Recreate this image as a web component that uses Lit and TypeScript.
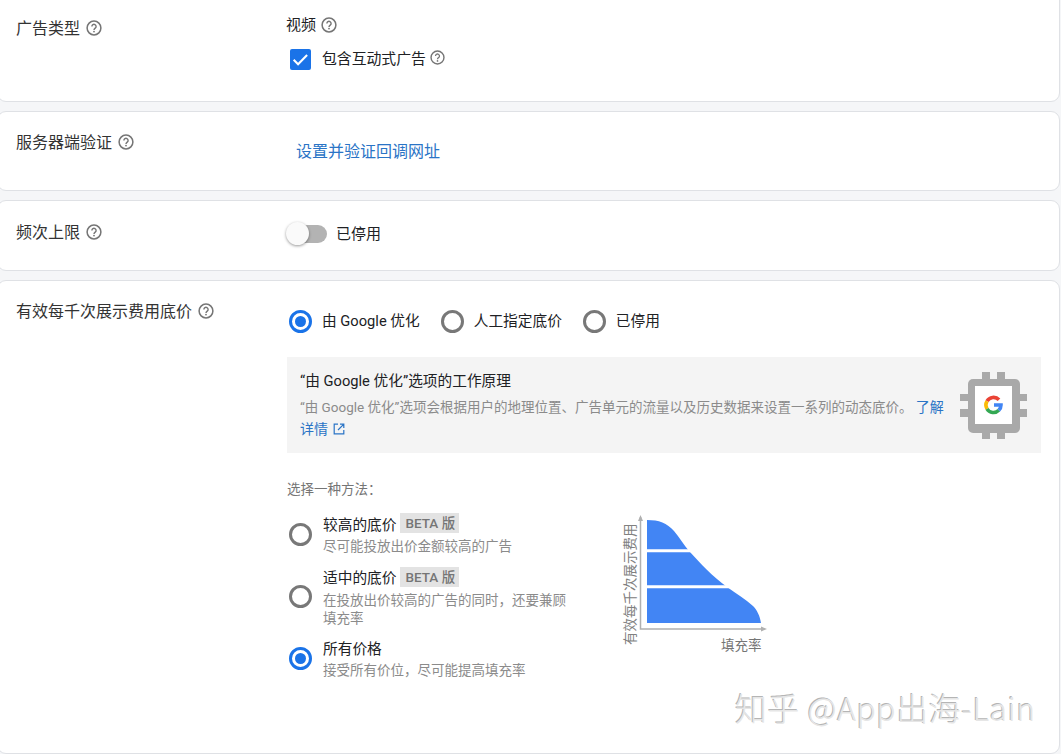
import { LitElement, html, css, svg } from "lit";
import { customElement } from "lit/decorators.js";

const help = (size: number) => html`<svg class="help" width=${size} height=${size} viewBox="0 0 16 16" fill="none">
  <circle cx="8" cy="8" r="6.9" stroke="#757575" stroke-width="1.5"/>
  <path d="M5.9 6.4a2.1 2.1 0 1 1 3.3 1.7c-.8.6-1.2.9-1.2 1.8" stroke="#757575" stroke-width="1.4"/>
  <circle cx="8" cy="11.6" r=".9" fill="#757575"/>
</svg>`;

const radio = (on: boolean) => html`<span class="radio ${on ? "on" : ""}"></span>`;

const chip = svg`
  <g fill="#a9a9a9">
    <rect x="22" y="0" width="8" height="11"/><rect x="37" y="0" width="8" height="11"/>
    <rect x="22" y="56" width="8" height="11"/><rect x="37" y="56" width="8" height="11"/>
    <rect x="0" y="22" width="11" height="7"/><rect x="0" y="37" width="11" height="8"/>
    <rect x="56" y="22" width="11" height="7"/><rect x="56" y="37" width="11" height="8"/>
    <rect x="8" y="7" width="52" height="54" rx="5"/>
  </g>
  <rect x="15" y="14" width="37" height="38" fill="#fff"/>
  <g fill="none" stroke-width="3.6">
    <path d="M39 27.800A7.500 7.500 0 0 0 27 29.200" stroke="#ea4335"/>
    <path d="M27 29.200A7.500 7.500 0 0 0 27 36.800" stroke="#fbbc05"/>
    <path d="M27 36.800A7.500 7.500 0 0 0 38.800 38.300" stroke="#34a853"/>
    <path d="M38.800 38.300A7.500 7.500 0 0 0 41 33H34" stroke="#4285f4"/>
  </g>`;

@customElement("app-root")
export class AppRoot extends LitElement {
  static styles = css`
    :host {
      display: block;
      position: relative;
      width: 1061px;
      height: 754px;
      overflow: hidden;
      background: #f5f6f8;
      font-family: Roboto, "Noto Sans CJK SC", sans-serif;
      color: #202124;
    }
    .page { display: flex; flex-direction: column; gap: 9px; margin: -12px 1px 0 -3px; }
    .card {
      background: #fff;
      border: 1px solid #dfe1e5;
      border-radius: 9px;
      display: grid;
      grid-template-columns: 288px 1fr;
      box-sizing: border-box;
    }
    .c1 { height: 114px; padding-top: 29px; }
    .c2 { height: 80px; padding-top: 20px; }
    .c3 { height: 71px; padding-top: 21px; }
    .c4 { height: 474px; padding-top: 20px; }
    .label { padding-left: 18px; font-size: 16px; line-height: 22px; display: flex; gap: 6px; align-items: flex-start; color: #333; }
    .label .help { margin-top: 2px; }
    .row { display: flex; align-items: center; }
    .video { font-size: 15px; line-height: 22px; gap: 5px; margin-top: -4px; }
    .check-row { font-size: 14.85px; line-height: 22px; margin: 11px 0 0 4px; }
    .check { width: 21px; height: 21px; border-radius: 2px; background: #1a73e8; margin-right: 11px; margin-top: 2px; display: flex; }
    .check-row .help { margin-left: 4px; margin-top: -2px; }
    .link { color: #2a74c6; text-decoration: none; }
    .verify { font-size: 16px; line-height: 22px; margin: 9px 0 0 10px; display: block; }
    .toggle { font-size: 15px; line-height: 22px; margin-top: 1px; }
    .track { position: absolute; left: 7px; top: 2px; width: 34px; height: 18px; border-radius: 9px; background: #b3b3b3; }
    .knob { position: absolute; left: 0; top: -1px; width: 23px; height: 23px; border-radius: 50%; background: #fafafa; box-shadow: 0 1px 3px rgba(0,0,0,.4); }
    .switch { position: relative; width: 41px; height: 22px; margin-right: 9px; }
    .modes { display: flex; align-items: center; font-size: 14.7px; line-height: 22px; margin: 8px 0 0 2px; height: 24px; }
    .modes label { display: flex; align-items: center; gap: 10px; margin-right: 21px; }
    .radio { width: 23px; height: 23px; box-sizing: border-box; border-radius: 50%; border: 3px solid #787878; background: #fff; display: block; flex: none; position: relative; }
    .radio.on { border-color: #1a73e8; }
    .radio.on::after { content: ""; position: absolute; inset: 3px; border-radius: 50%; background: #1a73e8; }
    .body { margin-left: 1px; }
    .info { margin-top: 24px; width: 754px; height: 96px; box-sizing: border-box; background: #f4f4f4; padding: 13px 14px 13px 13px; display: flex; gap: 16px; align-items: center; }
    .info-text { flex: 1; align-self: flex-start; }
    .info-title { font-size: 14.7px; line-height: 22px; }
    .info-desc { font-size: 13.5px; line-height: 21.5px; color: #8b8b8b; margin-top: 5px; }
    .info-desc .link { font-size: 14px; }
    .ext { vertical-align: -1px; margin-left: 2px; }
    .pick { font-size: 13.5px; line-height: 18px; color: #757575; margin-top: 27px; }
    .methods-wrap { display: flex; gap: 49px; margin-top: 15px; }
    .methods { width: 281px; display: flex; flex-direction: column; gap: 11.5px; }
    .method { display: flex; align-items: center; gap: 11px; padding-left: 2px; }
    .m-title { font-size: 14.7px; line-height: 22px; display: flex; gap: 4px; align-items: center; color: #202124; }
    .badge { background: #e3e3e3; color: #757575; font-size: 13.5px; line-height: 20px; padding: 0 4px 0 5px; font-weight: 500; margin-bottom: 3px; }
    .m-desc { font-size: 13.5px; line-height: 18px; color: #8b8b8b; width: 250px; margin-top: 1px; }
    .chart { width: 160px; height: 145px; position: relative; flex: none; margin-top: 1px; }
    .chart svg { display: block; position: absolute; left: 0; top: 0; }
    .y-label { position: absolute; left: 6px; top: 9px; writing-mode: vertical-rl; text-orientation: sideways; transform: rotate(180deg); font-size: 13.5px; line-height: 15px; color: #808080; height: 122px; white-space: nowrap; }
    .x-label { position: absolute; left: 104px; top: 122px; font-size: 13.5px; line-height: 18px; color: #757575; }
    .mark { position: absolute; left: 735px; top: 686px; font-size: 32px; line-height: 42px; color: #e6e6e6; letter-spacing: .5px; white-space: nowrap; font-family: "Noto Sans CJK SC", sans-serif; font-weight: 300; text-shadow: -1px -1px 0 #b5b5b5; }
  `;

  render() {
    return html`
      <div class="page">
        <section class="card c1">
          <div class="label">广告类型 ${help(16)}</div>
          <div>
            <div class="row video">视频 ${help(16)}</div>
            <div class="row check-row">
              <span class="check"><svg width="21" height="21" viewBox="0 0 20 20" fill="none"><path d="M3.500 10.300l4.200 4.200 8.600-8.700" stroke="#fff" stroke-width="2"/></svg></span>
              包含互动式广告 ${help(15)}
            </div>
          </div>
        </section>
        <section class="card c2">
          <div class="label">服务器端验证 ${help(16)}</div>
          <div><a class="link verify">设置并验证回调网址</a></div>
        </section>
        <section class="card c3">
          <div class="label">频次上限 ${help(16)}</div>
          <div class="row toggle" style="align-self:start">
            <span class="switch"><span class="track"></span><span class="knob"></span></span>已停用
          </div>
        </section>
        <section class="card c4">
          <div class="label">有效每千次展示费用底价 ${help(16)}</div>
          <div class="body">
            <div class="modes">
              <label>${radio(true)}由 Google 优化</label>
              <label>${radio(false)}人工指定底价</label>
              <label>${radio(false)}已停用</label>
            </div>
            <div class="info">
              <div class="info-text">
                <div class="info-title">“由 Google 优化”选项的工作原理</div>
                <div class="info-desc"><span>“由 Google 优化”选项会根据用户的地理位置、广告单元的流量以及历史数据来设置一系列的动态底价。</span> <a class="link">了解</a><br><a class="link">详情 <svg class="ext" width="12" height="12" viewBox="0 0 12 12" fill="none" stroke="#2a74c6" stroke-width="1.2"><path d="M5 1.200H1.200v9.600h9.600V7M7 1.200h3.800V5M10.600 1.400L5 7"/></svg></a></div>
              </div>
              <svg width="67" height="67" viewBox="0 0 67 67">${chip}</svg>
            </div>
            <div class="pick">选择一种方法：</div>
            <div class="methods-wrap">
              <div class="methods">
                <div class="method">${radio(false)}<div>
                  <div class="m-title">较高的底价 <span class="badge">BETA 版</span></div>
                  <div class="m-desc">尽可能投放出价金额较高的广告</div></div></div>
                <div class="method">${radio(false)}<div>
                  <div class="m-title">适中的底价 <span class="badge">BETA 版</span></div>
                  <div class="m-desc">在投放出价较高的广告的同时，还要兼顾填充率</div></div></div>
                <div class="method">${radio(true)}<div>
                  <div class="m-title">所有价格</div>
                  <div class="m-desc">接受所有价位，尽可能提高填充率</div></div></div>
              </div>
              <div class="chart">
                <svg width="160" height="145" viewBox="0 0 160 145">
                  <path d="M23.500 3V115H147" fill="none" stroke="#b0b0b0" stroke-width="1.5"/>
                  <path d="M23.500 1l-2.500 6h5zM150 115l-6-2.500v5z" fill="#b0b0b0"/>
                  <path d="M30 6C42 6 50 9 57 17C62 23 67 31 72 37C84 50 95 62 110 73C120 80 128 85 136 92C140 96 143 102 144 109H30Z" fill="#4285f4"/>
                  <path d="M30 36.700H80M30 72.700H120" stroke="#fff" stroke-width="3"/>
                </svg>
                <span class="y-label">有效每千次展示费用</span>
                <span class="x-label">填充率</span>
              </div>
            </div>
          </div>
        </section>
      </div>
      <div class="mark">知乎 @App出海-Lain</div>
    `;
  }
}
